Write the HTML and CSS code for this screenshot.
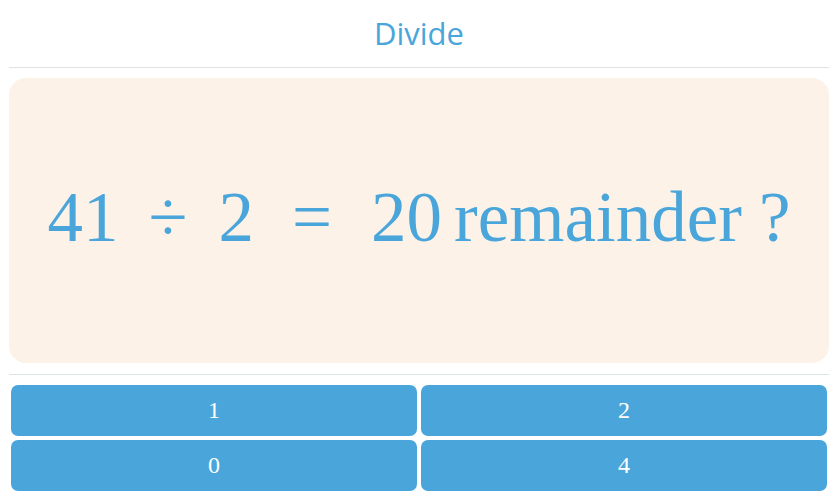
FILE: index.html
```html
<!DOCTYPE html>
<html>
<head>
<meta charset="utf-8">
<link rel="stylesheet" href="styles.css">
</head>
<body>
<div class="app">
  <header class="header"><h1 class="title">Divide</h1></header>
  <section class="card">
    <div class="equation">
      <span class="tok tok-a">41</span>
      <span class="tok tok-op1">÷</span>
      <span class="tok tok-b">2</span>
      <span class="tok tok-op2">=</span>
      <span class="tok tok-q">20</span>
      <span class="tok tok-word">remainder</span>
      <span class="tok tok-ask">?</span>
    </div>
  </section>
  <div class="answers">
    <button class="answer">1</button>
    <button class="answer">2</button>
    <button class="answer">0</button>
    <button class="answer">4</button>
  </div>
</div>
</body>
</html>
```
FILE: styles.css
```css
html, body {
  margin: 0;
  padding: 0;
  background: #ffffff;
}
.app {
  padding: 0 11px 0 9px;
  display: flex;
  flex-direction: column;
}
.header {
  height: 67px;
  border-bottom: 1px solid #e2e2e2;
  display: flex;
  align-items: center;
  justify-content: center;
}
.title {
  margin: 0;
  font-family: "Open Sans", sans-serif;
  font-weight: 400;
  font-size: 31px;
  color: #4aa6da;
  line-height: 1;
}
.card {
  margin-top: 10px;
  height: 285px;
  box-sizing: border-box;
  padding: 0 0 6px 0;
  background: #fcf2e8;
  border-radius: 17px;
  display: flex;
  align-items: center;
  justify-content: center;
}
.equation {
  display: flex;
  font-family: "Liberation Serif", "Times New Roman", serif;
  font-size: 71px;
  color: #4aa6da;
  line-height: 1;
  white-space: nowrap;
}
.tok-a { margin-right: 30px; }
.tok-op1 { margin-right: 31px; }
.tok-b { margin-right: 38px; }
.tok-op2 { margin-right: 39px; }
.tok-q { margin-right: 12px; }
.tok-word { margin-right: 17px; }
.answers {
  margin-top: 11px;
  border-top: 1px solid #dde5e5;
  padding-top: 8px;
  display: grid;
  grid-template-columns: 1fr 1fr;
}
.answer {
  margin: 2px;
  height: 51px;
  border: none;
  border-radius: 7px;
  background: #4aa6da;
  color: #ffffff;
  font-family: "Liberation Serif", "Times New Roman", serif;
  font-size: 24px;
  padding: 0;
}
```
